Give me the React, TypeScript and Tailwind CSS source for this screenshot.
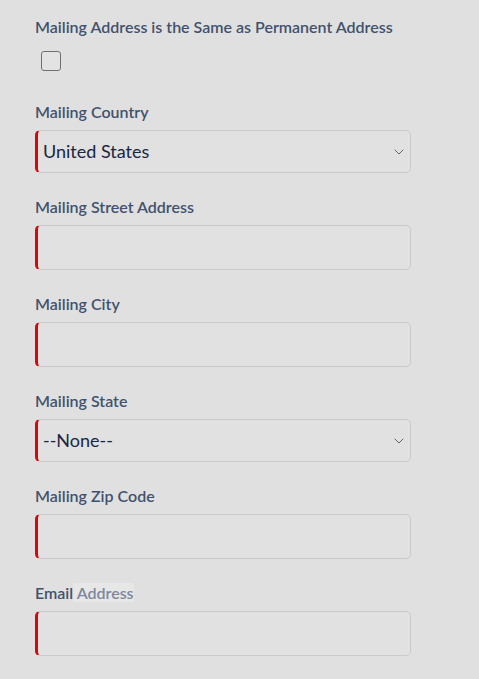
import { ChevronDown } from "lucide-react";

type Field = {
  label: string;
  kind: "select" | "input";
  value?: string;
  muted?: string;
};

const fields: Field[] = [
  { label: "Mailing Country", kind: "select", value: "United States" },
  { label: "Mailing Street Address", kind: "input" },
  { label: "Mailing City", kind: "input" },
  { label: "Mailing State", kind: "select", value: "--None--" },
  { label: "Mailing Zip Code", kind: "input" },
  { label: "Email", kind: "input", muted: "Address" },
];

function Label({ text, muted }: { text: string; muted?: string }) {
  return (
    <div className="mb-2 text-[16px] font-semibold leading-5 text-[#42526e]">
      {text}
      {muted ? <span className="bg-[#e7e7e8] text-[#7d889c]"> {muted}</span> : null}
    </div>
  );
}

function Box({ field }: { field: Field }) {
  const height = field.kind === "select" ? "h-[43px]" : "h-[45px]";
  return (
    <div
      className={`flex ${height} w-[376px] items-center rounded-[5px] border border-l-[3px] border-[#c9cacd] border-l-[#d40a0a] bg-[#e1e1e1] pl-[5px] pr-[3px]`}
    >
      {field.value ? (
        <span className="flex-1 text-[18px] text-[#1b2641]">{field.value}</span>
      ) : (
        <span className="flex-1" />
      )}
      {field.kind === "select" ? (
        <ChevronDown className="h-4 w-4 text-[#555c6b]" strokeWidth={1.4} />
      ) : null}
    </div>
  );
}

export default function App() {
  return (
    <div
      className="min-h-[679px] bg-[#e0e0e0] px-[35px] pt-[17px]"
      style={{ fontFamily: 'Lato, "Noto Sans", sans-serif' }}
    >
      <Label text="Mailing Address is the Same as Permanent Address" />
      <div className="mb-[31px] ml-[6px] mt-[14px] h-5 w-5 rounded-[3px] border border-[#6f6f72] bg-[#e3e3e3]" />
      <div className="flex flex-col gap-[24px]">
        {fields.map((field) => (
          <div key={field.label}>
            <Label text={field.label} muted={field.muted} />
            <Box field={field} />
          </div>
        ))}
      </div>
    </div>
  );
}
